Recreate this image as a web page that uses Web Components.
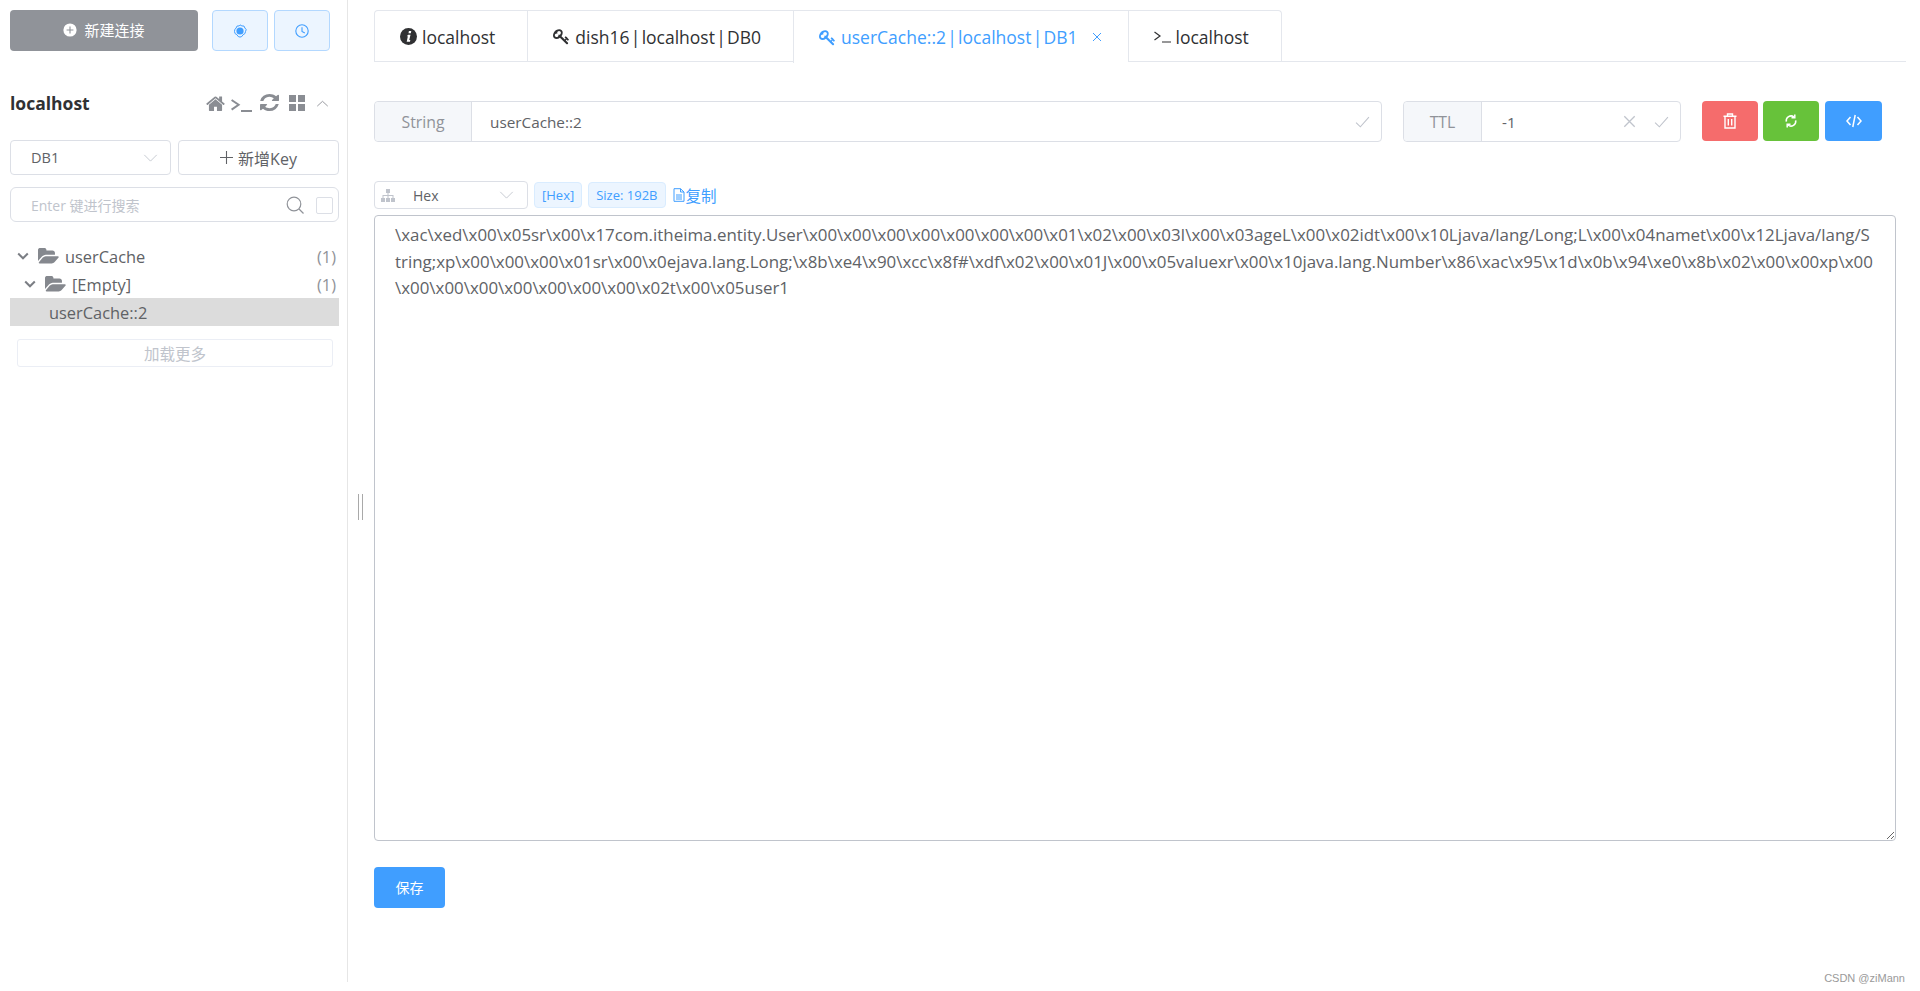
<!doctype html>
<html lang="zh">
<head>
<meta charset="utf-8">
<title>localhost</title>
<style>
  html, body { margin: 0; height: 100%; background: #fff; }
  body { font-family: "Open Sans", "Noto Sans CJK SC", sans-serif; color: #606266; }
</style>
</head>
<body>
<rdm-app>
  <rdm-sidebar slot="aside"></rdm-sidebar>
  <rdm-tabs slot="main">
    <rdm-tab icon="info">localhost</rdm-tab>
    <rdm-tab icon="key">dish16 | localhost | DB0</rdm-tab>
    <rdm-tab icon="key" active closable>userCache::2 | localhost | DB1</rdm-tab>
    <rdm-tab icon="term">localhost</rdm-tab>
  </rdm-tabs>
  <rdm-keybar slot="main"></rdm-keybar>
  <rdm-viewer slot="main">\xac\xed\x00\x05sr\x00\x17com.itheima.entity.User\x00\x00\x00\x00\x00\x00\x00\x01\x02\x00\x03I\x00\x03ageL\x00\x02idt\x00\x10Ljava/lang/Long;L\x00\x04namet\x00\x12Ljava/lang/String;xp\x00\x00\x00\x01sr\x00\x0ejava.lang.Long;\x8b\xe4\x90\xcc\x8f#\xdf\x02\x00\x01J\x00\x05valuexr\x00\x10java.lang.Number\x86\xac\x95\x1d\x0b\x94\xe0\x8b\x02\x00\x00xp\x00\x00\x00\x00\x00\x00\x00\x00\x02t\x00\x05user1</rdm-viewer>
</rdm-app>

<script>
(function () {
  'use strict';

  const FA = 'viewBox="0 0 1792 1792" fill="currentColor"';
  const ICONS = {
    plusc: '<svg viewBox="0 0 14 14"><circle cx="7" cy="7" r="6.6" fill="currentColor"/><path d="M7 3.6v6.8M3.6 7h6.8" stroke="#909399" stroke-width="1.1"/></svg>',
    gear: '<svg viewBox="0 0 14 14" fill="none" stroke="currentColor"><path d="M7 .9l1.9 1 2.1.2.9 1.9 1.3 1.6L12.5 7.600l-.6 2-1.800 1.100L8.800 12.500 7 13.100l-1.800-.6-1.300-1.800-1.800-1.100-.6-2 .3-2 1.300-1.600.9-1.900 2.100-.2z" stroke-width="1"/><circle cx="7" cy="7" r="3.600" fill="currentColor" stroke="none"/></svg>',
    clock: '<svg viewBox="0 0 14 14" fill="none" stroke="currentColor" stroke-width="1.100"><circle cx="7" cy="7" r="6.200"/><path d="M7 3.200V7.400l2.800 1.600"/></svg>',
    home: `<svg viewBox="64 128 1664 1408" fill="currentColor" preserveAspectRatio="none"><path d="M1472 992v480q0 26-19 45t-45 19h-384v-384h-256v384h-384q-26 0-45-19t-19-45v-480q0-1 .5-3t.5-3l575-474 575 474q1 2 1 6zm223-69l-62 74q-8 9-21 11h-3q-13 0-21-7l-692-577-692 577q-12 8-24 7-13-2-21-11l-62-74q-8-10-7-23.5t11-21.5l719-599q32-26 76-26t76 26l244 204v-195q0-14 9-23t23-9h192q14 0 23 9t9 23v408l219 182q10 8 11 21.5t-7 23.5z"/></svg>`,
    term: '<svg viewBox="0 0 21 13" fill="none" stroke="currentColor" stroke-width="2"><path d="M.6 1l7 4.800-7 4.800M10 12h11"/></svg>',
    tabterm: '<svg viewBox="0 0 17 12" fill="none" stroke="currentColor" stroke-width="1.200"><path d="M.5 1l5.500 4-5.500 4M8 11h9"/></svg>',
    sync: `<svg viewBox="128 128 1536 1536" fill="currentColor" preserveAspectRatio="none"><path d="M1639 1056q0 5-1 7-64 268-268 434.500t-478 166.500q-146 0-282.500-55t-243.500-157l-129 129q-19 19-45 19t-45-19-19-45v-448q0-26 19-45t45-19h448q26 0 45 19t19 45-19 45l-137 137q71 66 161 102t187 36q134 0 250-65t186-179q11-17 53-117 8-23 30-23h192q13 0 22.500 9.500t9.500 22.500zm25-800v448q0 26-19 45t-45 19h-448q-26 0-45-19t-19-45 19-45l138-138q-148-137-349-137-134 0-250 65t-186 179q-11 17-53 117-8 23-30 23h-199q-13 0-22.500-9.500t-9.500-22.500v-7q65-268 270-434.500t480-166.500q146 0 284 55.500t245 156.500l130-129q19-19 45-19t45 19 19 45z"/></svg>`,
    grid: '<svg viewBox="0 0 16 16" fill="currentColor"><rect x="0" y="0" width="7" height="7"/><rect x="9" y="0" width="7" height="7"/><rect x="0" y="9" width="7" height="7"/><rect x="9" y="9" width="7" height="7"/></svg>',
    up: '<svg viewBox="0 0 14 8" fill="none" stroke="currentColor" stroke-width="1"><path d="M1 7l6-5.500L13 7"/></svg>',
    down: '<svg viewBox="0 0 16 9" fill="none" stroke="currentColor" stroke-width="1"><path d="M1 1l7 7 7-7"/></svg>',
    caret: '<svg viewBox="0 0 12 8" fill="none" stroke="currentColor" stroke-width="2"><path d="M1.200 1.500L6 6.300l4.800-4.800"/></svg>',
    search: '<svg viewBox="0 0 18 18" fill="none" stroke="currentColor" stroke-width="1.200"><circle cx="8" cy="8" r="6.800"/><path d="M13 13l4.500 4.500"/></svg>',
    folder: '<svg viewBox="64 128 1800 1536" fill="currentColor"><path d="M1845 931q0 35-35 74l-336 396q-43 51-120.500 86.500t-143.500 35.500h-1088q-34 0-60.500-13t-26.500-43q0-35 35-74l336-396q43-51 120.500-86.500t143.500-35.500h1088q34 0 60.500 13t26.500 43zm-343-344v160h-832q-94 0-197 47.500t-164 119.500l-337 396-5 6q0-4-.5-12.500t-.5-12.500v-960q0-92 66-158t158-66h320q92 0 158 66t66 158v32h544q92 0 158 66t66 158z"/></svg>',
    key: `<svg ${FA}><path d="M832 512q0-80-56-136t-136-56-136 56-56 136q0 42 19 83-41-19-83-19-80 0-136 56t-56 136 56 136 136 56 136-56 56-136q0-42-19-83 41 19 83 19 80 0 136-56t56-136zm851 704q0 17-49 66t-66 49q-9 0-28.500-16t-36.500-33-38.500-40-24.500-26l-96 96 220 220q28 28 28 68 0 42-39 81t-81 39q-40 0-68-28l-671-671q-176 131-365 131-163 0-265.500-102.500t-102.500-265.500q0-160 95-313t248-248 313-95q163 0 265.500 102.500t102.500 265.500q0 189-131 365l355 355 96-96q-3-3-26-24.500t-40-38.500-33-36.500-16-28.500q0-17 49-66t66-49q13 0 23 10 6 6 46 44.500t82 79.500 86.500 86 73 78 28.500 41z"/></svg>`,
    info: '<svg viewBox="0 0 16 16"><circle cx="8" cy="8" r="8" fill="currentColor"/><path d="M8.400 2.900h2.200l-.4 2h-2.200zM7.700 6.300h2.200L8.700 11.400h1l-.3 1.600H6.300l1.100-5.200H6.400z" fill="#fff"/></svg>',
    close: '<svg viewBox="0 0 10 10" fill="none" stroke="currentColor" stroke-width="1"><path d="M1 1l8 8M9 1l-8 8"/></svg>',
    plus: '<svg viewBox="0 0 12 12" fill="none" stroke="currentColor" stroke-width="1"><path d="M6 0v12M0 6h12"/></svg>',
    check: '<svg viewBox="0 0 14 11" fill="none" stroke="currentColor" stroke-width="1"><path d="M1 6l4 4 8-9"/></svg>',
    trash: '<svg viewBox="0 0 14 16" fill="none" stroke="currentColor" stroke-width="1.400"><path d="M.5 3.300h13M4.500 3.300V1h5v2.300M2 3.300V15h10V3.300M5.300 6v6.500M8.700 6v6.500"/></svg>',
    refresh: '<svg viewBox="0 0 14 14" fill="none" stroke="currentColor" stroke-width="1.500"><path d="M2.300 7.600A4.800 4.800 0 0 1 10 3M11.700 6.400A4.800 4.800 0 0 1 4 11"/><path d="M10.800 .4v3.300H7.500M3.200 13.600v-3.300h3.300"/></svg>',
    code: '<svg viewBox="0 0 16 14" fill="none" stroke="currentColor" stroke-width="1.500"><path d="M4.500 3L1 7l3.500 4M11.500 3L15 7l-3.500 4M9.200 1L6.800 13"/></svg>',
    sitemap: '<svg viewBox="0 0 14 13" fill="currentColor"><rect x="5" y="0" width="4" height="4"/><rect x="0" y="9" width="4" height="4"/><rect x="5" y="9" width="4" height="4"/><rect x="10" y="9" width="4" height="4"/><path d="M6.500 4h1v2h5v3h-1V7h-4v2h-1V7h-4v2h-1V6h5z"/></svg>',
    doc: '<svg viewBox="0 0 12 14" fill="none" stroke="currentColor" stroke-width="1"><path d="M1 .7h6.500L11 4v9.300H1zM7.500 .7V4H11M3 7h6M3 9h6M3 11h6"/></svg>'
  };

  class RdmIcon extends HTMLElement {
    connectedCallback() {
      const root = this.shadowRoot || this.attachShadow({ mode: 'open' });
      const w = this.getAttribute('w') || 14;
      const h = this.getAttribute('h') || w;
      root.innerHTML = `<style>
        :host { display: inline-flex; flex: none; width: ${w}px; height: ${h}px; }
        svg { width: 100%; height: 100%; display: block; }
      </style>${ICONS[this.getAttribute('name')] || ''}`;
    }
  }

  // page frame: sidebar, drag handle, main pane
  class RdmApp extends HTMLElement {
    constructor() {
      super();
      this.attachShadow({ mode: 'open' }).innerHTML = `<style>
        :host { display: flex; height: 100vh; overflow: hidden; }
        .aside { width: 347px; flex: none; height: 982px; border-right: 1px solid #e6e6e6; }
        .handle { width: 26px; flex: none; display: flex; align-items: center; padding-left: 10px; box-sizing: border-box; padding-top: 22px; }
        .handle i { display: block; width: 5px; height: 26px; box-sizing: border-box; border-left: 1px solid #a9a9a9; border-right: 1px solid #a9a9a9; }
        .main { flex: 1; min-width: 0; padding: 10px 14px 0 0; box-sizing: border-box; }
      </style>
      <div class="aside"><slot name="aside"></slot></div>
      <div class="handle"><i></i></div>
      <div class="main"><slot name="main"></slot></div>`;
    }
  }

  class RdmSidebar extends HTMLElement {
    constructor() {
      super();
      this.attachShadow({ mode: 'open' }).innerHTML = `<style>
        :host { display: block; padding: 10px 8px 0 10px; font-size: 14px; color: #606266; }
        .top { display: flex; height: 41px; }
        .new { width: 188px; background: #909399; border-radius: 4px; color: #fff; display: flex; align-items: center; justify-content: center; gap: 7px; font-size: 15px; padding-bottom: 2px; box-sizing: border-box; }
        .sq { width: 56px; box-sizing: border-box; background: #ecf5ff; border: 1px solid #b3d8ff; border-radius: 4px; color: #409eff; display: flex; align-items: center; justify-content: center; margin-left: 6px; }
        .sq.first { margin-left: 14px; }
        .head { display: flex; align-items: center; margin-top: 38px; height: 27px; color: #8a8d93; }
        .head b { flex: 1; color: #303133; font-size: 17.5px; font-weight: 700; }
        .head rdm-icon { margin-right: 6px; }
        .head .s { margin-right: 8px; }
        .head .g { margin-right: 10px; }
        .head .e { margin-right: 11px; }
        .row { display: flex; justify-content: space-between; margin-top: 24px; height: 35px; }
        .box { box-sizing: border-box; height: 35px; width: 161px; border: 1px solid #dcdfe6; border-radius: 4px; display: flex; align-items: center; }
        .db { padding: 0 12px 0 20px; justify-content: space-between; font-size: 14.5px; }
        .db rdm-icon { color: #c0c4cc; }
        .add { justify-content: center; gap: 5px; font-size: 16px; }
        .search { width: 329px; margin-top: 12px; padding: 0 5px 0 20px; color: #c0c4cc; border-radius: 6px; }
        .search span { flex: 1; }
        .search rdm-icon { color: #909399; }
        .cb { width: 17px; height: 17px; border: 1px solid #dcdfe6; border-radius: 2px; margin-left: 12px; margin-top: 2px; box-sizing: border-box; }
        .tree { margin-top: 20px; }
        .more { box-sizing: border-box; margin: 13px 6px 0 7px; height: 28px; border: 1px solid #ebeef5; border-radius: 3px; color: #c0c4cc; display: flex; align-items: center; justify-content: center; font-size: 15.5px; }
      </style>
      <div class="top">
        <div class="new"><rdm-icon name="plusc" w="14"></rdm-icon>新建连接</div>
        <div class="sq first"><rdm-icon name="gear" w="14"></rdm-icon></div>
        <div class="sq"><rdm-icon name="clock" w="14"></rdm-icon></div>
      </div>
      <div class="head">
        <b>localhost</b>
        <rdm-icon name="home" w="19" h="16"></rdm-icon>
        <rdm-icon class="s" name="term" w="21" h="13" style="margin-top:5px"></rdm-icon>
        <rdm-icon name="sync" w="19" h="17" class="g"></rdm-icon>
        <rdm-icon name="grid" w="16" h="16" class="e"></rdm-icon>
        <rdm-icon name="up" w="13" h="7" style="margin:2px 10px 0 0"></rdm-icon>
      </div>
      <div class="row">
        <div class="box db"><span>DB1</span><rdm-icon name="down" w="15" h="8"></rdm-icon></div>
        <div class="box add"><rdm-icon name="plus" w="13" h="13"></rdm-icon>新增Key</div>
      </div>
      <div class="box search"><span>Enter 键进行搜索</span><rdm-icon name="search" w="18"></rdm-icon><div class="cb"></div></div>
      <div class="tree">
        <rdm-tree-row depth="0" folder count="(1)">userCache</rdm-tree-row>
        <rdm-tree-row depth="1" folder count="(1)">[Empty]</rdm-tree-row>
        <rdm-tree-row depth="2" selected>userCache::2</rdm-tree-row>
      </div>
      <div class="more">加载更多</div>`;
    }
  }

  class RdmTreeRow extends HTMLElement {
    connectedCallback() {
      const root = this.shadowRoot || this.attachShadow({ mode: 'open' });
      const depth = Number(this.getAttribute('depth') || 0);
      const folder = this.hasAttribute('folder');
      const left = depth === 2 ? 39 : 7 + depth * 7;
      root.innerHTML = `<style>
        :host { display: flex; align-items: center; height: 28px; font-size: 16.4px; color: #606266; padding: 0 3px 0 ${left}px; }
        :host([selected]) { background: #dcdcdc; }
        .c { color: #7b7e84; margin-right: 9px; }
        .f { color: #85888e; margin-right: 5px; }
        .t { flex: 1; }
        .n { color: #909399; }
      </style>
      ${folder ? '<rdm-icon class="c" name="caret" w="12" h="8"></rdm-icon><rdm-icon class="f" name="folder" w="22" h="17"></rdm-icon>' : ''}
      <span class="t"><slot></slot></span>
      <span class="n">${this.getAttribute('count') || ''}</span>`;
    }
  }

  class RdmTabs extends HTMLElement {
    constructor() {
      super();
      this.attachShadow({ mode: 'open' }).innerHTML = `<style>
        :host { display: block; border-bottom: 1px solid #e4e7ed; height: 52px; box-sizing: border-box; }
        .nav { display: inline-flex; border: 1px solid #e4e7ed; border-bottom: none; border-radius: 4px 4px 0 0; height: 52px; box-sizing: border-box; }
      </style><div class="nav"><slot></slot></div>`;
    }
  }

  class RdmTab extends HTMLElement {
    connectedCallback() {
      const root = this.shadowRoot || this.attachShadow({ mode: 'open' });
      const icon = this.getAttribute('icon');
      const attrs = icon === 'term' ? 'name="tabterm" w="17" h="12"' : `name="${icon}" w="17" h="17"`;
      root.innerHTML = `<style>
        :host { display: flex; align-items: center; gap: 5px; padding: 0 32px 0 25px; font-size: 17.5px; word-spacing: -3.3px; color: #303133; border-left: 1px solid #e4e7ed; font-weight: 500; height: 51px; }
        :host(:first-child) { border-left: none; }
        :host([active]) { color: #409eff; background: #fff; height: 52px; position: relative; z-index: 1; padding-right: 26px; }
        .x { margin-left: 9px; }
      </style>
      <rdm-icon ${attrs}></rdm-icon><slot></slot>
      ${this.hasAttribute('closable') ? '<rdm-icon class="x" name="close" w="10" h="10"></rdm-icon>' : ''}`;
    }
  }

  class RdmKeybar extends HTMLElement {
    constructor() {
      super();
      this.attachShadow({ mode: 'open' }).innerHTML = `<style>
        :host { display: flex; margin-top: 39px; height: 40px; padding-right: 24px; font-size: 15.3px; color: #606266; }
        .group { display: flex; box-sizing: border-box; border: 1px solid #dcdfe6; border-radius: 4px; align-items: center; height: 41px; }
        .group.key { flex: 1; }
        .group.ttl { width: 278px; margin-left: 21px; }
        .pre { align-self: stretch; background: #f5f7fa; color: #909399; border-right: 1px solid #dcdfe6; border-radius: 4px 0 0 4px; display: flex; align-items: center; justify-content: center; box-sizing: border-box; font-size: 15.8px; }
        .key .pre { width: 97px; }
        .ttl .pre { width: 78px; }
        .val { flex: 1; padding-left: 18px; }
        .ttl .val { padding-left: 20px; }
        rdm-icon { color: #c0c4cc; }
        .group rdm-icon:last-child { margin: 0 11px 0 0; }
        .ttl .cl { margin-right: 18px; }
        .btn { width: 56px; height: 40px; border-radius: 4px; color: #fff; display: flex; align-items: center; justify-content: center; margin-left: 5px; }
        .btn rdm-icon { color: #fff; }
        .red { background: #f56c6c; margin-left: 21px; }
        .green { background: #67c23a; }
        .blue { background: #409eff; margin-left: 6px; width: 57px; }
      </style>
      <div class="group key"><div class="pre">String</div><div class="val">userCache::2</div><rdm-icon name="check" w="15" h="12"></rdm-icon></div>
      <div class="group ttl"><div class="pre">TTL</div><div class="val">-1</div><rdm-icon class="cl" name="close" w="13" h="13"></rdm-icon><rdm-icon name="check" w="15" h="12"></rdm-icon></div>
      <div class="btn red"><rdm-icon name="trash" w="14" h="16"></rdm-icon></div>
      <div class="btn green"><rdm-icon name="refresh" w="14" h="14"></rdm-icon></div>
      <div class="btn blue"><rdm-icon name="code" w="16" h="14"></rdm-icon></div>`;
    }
  }

  class RdmViewer extends HTMLElement {
    constructor() {
      super();
      this.attachShadow({ mode: 'open' }).innerHTML = `<style>
        :host { display: block; padding-right: 10px; margin-top: 40px; }
        .bar { display: flex; align-items: center; height: 28px; font-size: 15.5px; }
        .fmt { width: 154px; height: 28px; box-sizing: border-box; border: 1px solid #dcdfe6; border-radius: 4px; display: flex; align-items: center; padding: 0 13px 0 6px; color: #606266; font-size: 14px; }
        .fmt span { flex: 1; padding-left: 18px; }
        .fmt rdm-icon { color: #c0c4cc; }
        .tag { box-sizing: border-box; height: 26px; margin-left: 6px; padding: 0 7px; background: #ecf5ff; border: 1px solid #d9ecff; border-radius: 4px; color: #409eff; font-size: 13px; display: flex; align-items: center; }
        .copy { margin-left: 7px; color: #409eff; display: flex; align-items: center; gap: 1px; }
        .area { box-sizing: border-box; margin-top: 6px; height: 626px; border: 1px solid #c0c4cc; border-radius: 4px; padding: 6px 20px 0 20px; line-height: 26.500px; font-size: 16.900px; color: #606266; word-break: break-all; overflow: hidden; resize: both; }
        .save { margin-top: 26px; width: 71px; height: 41px; border-radius: 4px; background: #409eff; color: #fff; font-size: 14px; display: flex; align-items: center; justify-content: center; padding-bottom: 2px; box-sizing: border-box; }
        .mark { position: absolute; right: 15px; bottom: 7px; font: 11px "Liberation Sans", sans-serif; color: #9a9a9a; }
      </style>
      <div class="bar">
        <div class="fmt"><rdm-icon name="sitemap" w="14" h="13"></rdm-icon><span>Hex</span><rdm-icon name="down" w="15" h="8"></rdm-icon></div>
        <div class="tag">[Hex]</div><div class="tag">Size: 192B</div>
        <div class="copy"><rdm-icon name="doc" w="12" h="14"></rdm-icon>复制</div>
      </div>
      <div class="area"><slot></slot></div>
      <div class="save">保存</div>
      <div class="mark">CSDN @ziMann</div>`;
    }
  }

  customElements.define('rdm-icon', RdmIcon);
  customElements.define('rdm-app', RdmApp);
  customElements.define('rdm-sidebar', RdmSidebar);
  customElements.define('rdm-tree-row', RdmTreeRow);
  customElements.define('rdm-tabs', RdmTabs);
  customElements.define('rdm-tab', RdmTab);
  customElements.define('rdm-keybar', RdmKeybar);
  customElements.define('rdm-viewer', RdmViewer);
})();
</script>
</body>
</html>
